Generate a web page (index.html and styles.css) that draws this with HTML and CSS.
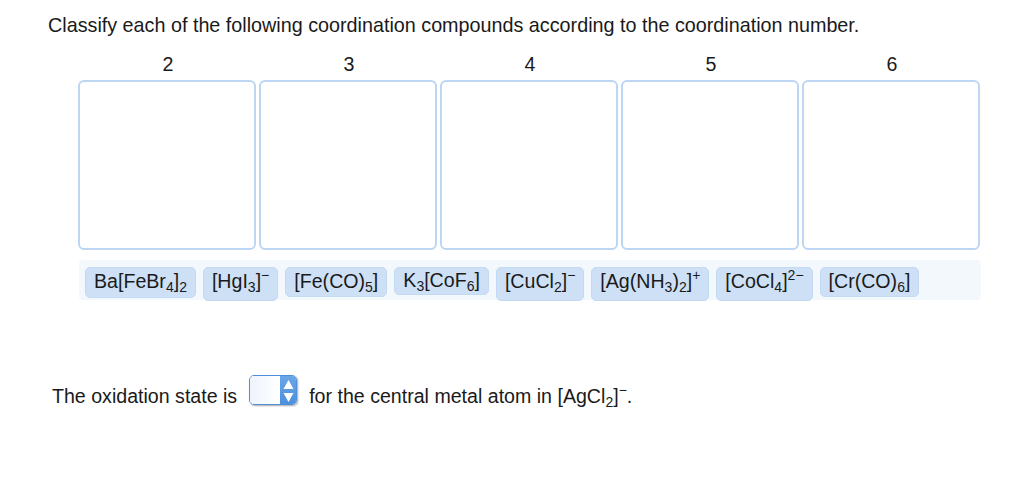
FILE: index.html
```html
<!DOCTYPE html>
<html lang="en">
<head>
<meta charset="utf-8">
<title>Coordination number</title>
<link rel="stylesheet" href="styles.css">
</head>
<body>
<main class="page">
  <p class="prompt">Classify each of the following coordination compounds according to the coordination number.</p>

  <section class="bins">
    <div class="bin-label">2</div>
    <div class="bin-label">3</div>
    <div class="bin-label">4</div>
    <div class="bin-label">5</div>
    <div class="bin-label">6</div>
    <div class="bin"></div>
    <div class="bin"></div>
    <div class="bin"></div>
    <div class="bin"></div>
    <div class="bin"></div>
  </section>

  <section class="tray">
    <span class="tile">Ba[FeBr<sub>4</sub>]<sub>2</sub></span>
    <span class="tile tile-ion">[HgI<sub>3</sub>]<sup>−</sup></span>
    <span class="tile tile-mid">[Fe(CO)<sub>5</sub>]</span>
    <span class="tile tile-short">K<sub>3</sub>[CoF<sub>6</sub>]</span>
    <span class="tile tile-ion">[CuCl<sub>2</sub>]<sup>−</sup></span>
    <span class="tile tile-ion">[Ag(NH<sub>3</sub>)<sub>2</sub>]<sup>+</sup></span>
    <span class="tile tile-ion">[CoCl<sub>4</sub>]<sup>2−</sup></span>
    <span class="tile tile-mid">[Cr(CO)<sub>6</sub>]</span>
  </section>

  <p class="answer">
    <span class="answer-text">The oxidation state is</span>
    <span class="spinner">
      <span class="spinner-field"></span>
      <span class="spinner-arrows">
        <svg width="11" height="26" viewBox="0 0 11 26">
          <path d="M5.5 3 L10.5 12 L0.5 12 Z" fill="#fff"/>
          <path d="M0.5 16 L10.5 16 L5.5 25 Z" fill="#fff"/>
        </svg>
      </span>
    </span>
    <span class="answer-text">for the central metal atom in [AgCl<sub>2</sub>]<sup>−</sup>.</span>
  </p>
</main>
</body>
</html>
```

FILE: styles.css
```css
html, body {
  margin: 0;
  padding: 0;
  background: #fff;
}

body {
  font-family: "Liberation Sans", Arial, sans-serif;
  font-size: 19.6px;
  line-height: 22px;
  color: #1a1a1a;
}

.page {
  padding: 14px 0 0 48px;
}

.prompt {
  margin: 0;
  font-size: 19.75px;
}

/* five drop bins with their coordination-number headings */
.bins {
  display: grid;
  grid-template-columns: repeat(5, 178px);
  grid-template-rows: 22px 170px;
  column-gap: 3px;
  row-gap: 5px;
  margin: 17px 0 0 30px;
}

.bin-label {
  text-align: center;
  padding-left: 2px;
}

.bin {
  box-sizing: border-box;
  border: 2px solid #bcd6f4;
  border-radius: 6px;
  background: #fff;
}

/* tray of draggable formulas */
.tray {
  display: flex;
  align-items: flex-start;
  gap: 7px;
  box-sizing: border-box;
  height: 40px;
  width: 902px;
  margin: 10px 0 0 31px;
  padding: 7px 0 0 6px;
  background: #f3f8fd;
  border-radius: 4px;
}

.tile {
  box-sizing: border-box;
  height: 31px;
  padding: 2px 8px 0 8px;
  background: #cde0f6;
  border: 1px solid #c4daf3;
  border-radius: 5px;
  white-space: nowrap;
}

.tile-ion {
  height: 34px;
}

.tile-mid {
  height: 30px;
}

.tile-short {
  height: 28px;
  padding-top: 1px;
}

sub, sup {
  font-size: 14px;
  line-height: 0;
  position: relative;
  vertical-align: baseline;
}

sub {
  top: 4px;
}

sup {
  top: -8px;
}

/* fill-in sentence with the value spinner */
.answer {
  display: flex;
  align-items: flex-start;
  gap: 12px;
  margin: 75px 0 0 4px;
}

.answer-text {
  padding-top: 10px;
}

.spinner {
  display: flex;
  box-sizing: border-box;
  width: 48px;
  height: 30px;
  border: 1px solid #4e8fdb;
  border-radius: 5px;
  overflow: hidden;
  box-shadow: 1px 1px 2px rgba(0, 0, 0, 0.35);
}

.spinner-field {
  flex: 1;
  background: linear-gradient(to right, #eef4fb, #ffffff);
}

.spinner-arrows {
  display: flex;
  align-items: center;
  justify-content: center;
  width: 16px;
  background: linear-gradient(to bottom, #6aa7e8, #4d8fdc);
}
```
